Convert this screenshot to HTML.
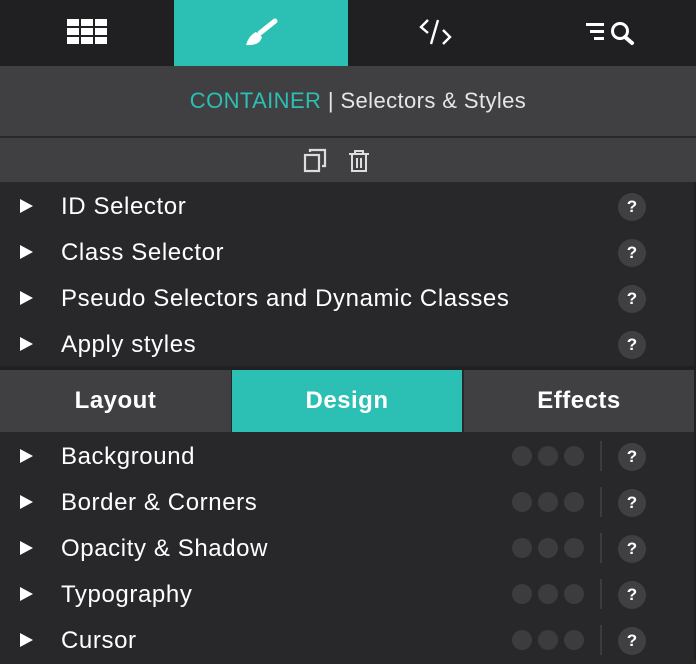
<!DOCTYPE html>
<html><head><style>
*{margin:0;padding:0;box-sizing:border-box}
body{width:696px;height:660px;background:#28282b;font-family:"Liberation Sans",sans-serif;overflow:hidden;position:relative;color:#fff}
.top{position:absolute;top:0;left:0;width:696px;height:66px;background:#202022}
.act{position:absolute;left:174px;top:0;width:174px;height:66px;background:#2cbfb3}
.hdr{position:absolute;top:66px;left:0;width:696px;height:70px;background:#404043;text-align:center;padding-left:20px;line-height:70px;font-size:22px;letter-spacing:0.4px;color:#e6e6e6}
.tool{position:absolute;top:138px;left:0;width:696px;height:44px;background:#404043}
.row{position:absolute;left:0;width:694px;height:46px;font-size:24px;letter-spacing:0.6px;line-height:47px;color:#fff}
.row .tri{position:absolute;left:20px;top:16px;width:0;height:0;border-left:13px solid #fff;border-top:7px solid transparent;border-bottom:7px solid transparent}
.row .t{position:absolute;left:61px}
.q{position:absolute;left:618px;top:10px;width:28px;height:28px;border-radius:50%;background:#404043;font-size:17px;letter-spacing:0;font-weight:bold;line-height:28px;text-align:center}
.d{position:absolute;top:13px;width:20px;height:20px;border-radius:50%;background:#3c3c3f}
.sep{position:absolute;left:600px;top:8px;width:2px;height:30px;background:#3c3c3f}
.tab{position:absolute;top:370px;height:62px;background:#404043;font-size:24px;letter-spacing:0.5px;font-weight:bold;text-align:center;line-height:62px}
</style></head><body>
<div class="top"></div><div class="act"></div>
<svg style="position:absolute;left:0;top:0" width="696" height="66">
<g fill="#fff">
<rect x="67" y="19" width="12" height="7"/><rect x="81" y="19" width="12" height="7"/><rect x="95" y="19" width="12" height="7"/>
<rect x="67" y="28" width="12" height="7"/><rect x="81" y="28" width="12" height="7"/><rect x="95" y="28" width="12" height="7"/>
<rect x="67" y="37" width="12" height="7"/><rect x="81" y="37" width="12" height="7"/><rect x="95" y="37" width="12" height="7"/>
</g>
<path d="M275 21 L260 33" stroke="#fff" stroke-width="5" stroke-linecap="round"/>
<path d="M256 32 L262 37 Q260 46 246 45 Q249 35 256 32Z" fill="#fff"/>
<g stroke="#fff" stroke-width="2.4" fill="none">
<path d="M428 20 L421 27 L428 33"/><path d="M443 30 L450 37 L443 44"/><path d="M438 20 L431 44"/>
</g>
<g fill="#fff"><rect x="586" y="23" width="18" height="3"/><rect x="590" y="30" width="14" height="3"/><rect x="594" y="37" width="10" height="3"/></g>
<circle cx="620" cy="31" r="7.5" stroke="#fff" stroke-width="3" fill="none"/>
<path d="M625 37 L632 43" stroke="#fff" stroke-width="4" stroke-linecap="round"/>
</svg>
<div class="hdr"><span style="color:#2cbfb3">CONTAINER</span><span style="color:#e6e6e6"> | </span>Selectors &amp; Styles</div>
<div style="position:absolute;top:136px;left:0;width:696px;height:2px;background:#28282b"></div>
<div class="tool"></div>
<svg style="position:absolute;left:0;top:138px" width="696" height="44">
<g fill="none" stroke="#ddd" stroke-width="2.2"><rect x="305" y="17" width="14" height="16"/><path d="M310 14 V12 H325 V28 H322"/>
<path d="M349 16 H369 M355 16 V13 H363 V16 M352 16 V33 H366 V16 M357 20 V30 M361 20 V30" stroke-width="2"/></g>
</svg>
<div class="row" style="top:183px"><div class="tri"></div><span class="t">ID Selector</span><div class="q">?</div></div>
<div class="row" style="top:229px"><div class="tri"></div><span class="t">Class Selector</span><div class="q">?</div></div>
<div class="row" style="top:275px"><div class="tri"></div><span class="t">Pseudo Selectors and Dynamic Classes</span><div class="q">?</div></div>
<div class="row" style="top:321px"><div class="tri"></div><span class="t">Apply styles</span><div class="q">?</div></div>
<div style="position:absolute;top:366px;left:0;width:696px;height:4px;background:#202022"></div>
<div class="tab" style="left:0;width:231px">Layout</div>
<div class="tab" style="left:232px;width:230px;background:#2cbfb3">Design</div>
<div class="tab" style="left:464px;width:230px">Effects</div>
<div class="row" style="top:433px"><div class="tri"></div><span class="t">Background</span><div class="d" style="left:512px"></div><div class="d" style="left:538px"></div><div class="d" style="left:564px"></div><div class="sep"></div><div class="q">?</div></div>
<div class="row" style="top:479px"><div class="tri"></div><span class="t">Border &amp; Corners</span><div class="d" style="left:512px"></div><div class="d" style="left:538px"></div><div class="d" style="left:564px"></div><div class="sep"></div><div class="q">?</div></div>
<div class="row" style="top:525px"><div class="tri"></div><span class="t">Opacity &amp; Shadow</span><div class="d" style="left:512px"></div><div class="d" style="left:538px"></div><div class="d" style="left:564px"></div><div class="sep"></div><div class="q">?</div></div>
<div class="row" style="top:571px"><div class="tri"></div><span class="t">Typography</span><div class="d" style="left:512px"></div><div class="d" style="left:538px"></div><div class="d" style="left:564px"></div><div class="sep"></div><div class="q">?</div></div>
<div class="row" style="top:617px"><div class="tri"></div><span class="t">Cursor</span><div class="d" style="left:512px"></div><div class="d" style="left:538px"></div><div class="d" style="left:564px"></div><div class="sep"></div><div class="q">?</div></div>
<div style="position:absolute;top:182px;left:694px;width:2px;height:478px;background:#202022"></div>
</body></html>
